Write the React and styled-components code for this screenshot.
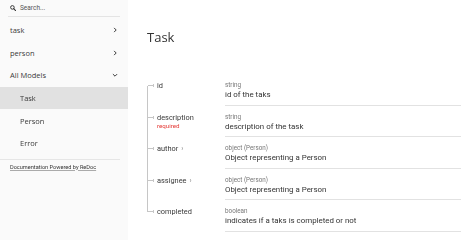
import React from "react";
import styled, { createGlobalStyle } from "styled-components";

const GlobalStyle = createGlobalStyle`
  html, body {
    margin: 0;
    padding: 0;
    background: #fff;
  }
  body {
    font-family: Roboto, "Liberation Sans", sans-serif;
    color: #333;
  }
`;

const Page = styled.div`
  display: flex;
  width: 474px;
  height: 244px;
  overflow: hidden;
  opacity: 0.999;
`;

const Sidebar = styled.nav`
  width: 128px;
  height: 240px;
  flex-shrink: 0;
  background: #fafafa;
  display: flex;
  flex-direction: column;
  font-family: "Open Sans", sans-serif;
`;

const Search = styled.div`
  display: flex;
  align-items: center;
  gap: 4px;
  height: 16px;
  margin: 0 8px;
  padding-left: 2px;
  border-bottom: 1px solid #e4e4e4;
  font-size: 6.5px;
  color: #555;
  font-family: Roboto, sans-serif;
`;

const Menu = styled.ul`
  list-style: none;
  margin: 2px 8px 0 0;
  padding: 0 0 4px;
  border-bottom: 1px solid #e6e6e6;
`;

const Item = styled.li`
  height: 22.6px;
  display: flex;
  align-items: center;
  justify-content: space-between;
  margin-right: -8px;
  padding: 0 10px 0 ${(p) => (p.$child ? "20px" : "10px")};
  font-size: 7.5px;
  color: #3a3a3a;
  background: ${(p) => (p.$active ? "#e1e1e1" : "transparent")};
`;

const Powered = styled.a`
  display: block;
  margin: 4px 10px 0;
  font-size: 5.6px;
  color: #333;
  text-decoration: underline;
  text-decoration-color: #aaa;
  font-family: Roboto, sans-serif;
`;

const Main = styled.main`
  flex: 1;
  padding: 29px 12px 0 19px;
`;

const Title = styled.h2`
  margin: 0 0 29px;
  font-family: "Open Sans", sans-serif;
  font-weight: 400;
  font-size: 13px;
  line-height: 16px;
  color: #333;
`;

const Table = styled.div`
  display: grid;
  grid-template-columns: 78px 236px;
`;

const LINE = "#c6c6c6";

const NameCell = styled.div`
  position: relative;
  padding: 7px 0 0 9px;
  border-left: 1px solid ${(p) => (p.$last ? "transparent" : LINE)};
  font-size: 7.4px;
  line-height: 9px;
  color: #3a3a3a;

  &::before {
    content: "";
    position: absolute;
    left: -1px;
    top: 0;
    width: 1px;
    height: ${(p) => (p.$first || p.$last ? "12px" : "0")};
    background: ${(p) => (p.$first ? "#fff" : LINE)};
  }
`;

const Bullet = styled.span`
  position: absolute;
  left: 0;
  top: 10px;
  display: flex;
  align-items: center;

  &::before {
    content: "";
    width: 5px;
    height: 1px;
    background: ${LINE};
  }
  &::after {
    content: "";
    width: 1px;
    height: 3px;
    background: ${LINE};
  }
`;

const Required = styled.div`
  color: #e53935;
  font-size: 6.2px;
  line-height: 8px;
`;

const Chevron = styled.span`
  color: #888;
  font-size: 7px;
  margin-left: 3px;
`;

const DetailCell = styled.div`
  padding: 7px 0 4.5px;
  border-bottom: 1px solid #e2e2e2;
`;

const Type = styled.div`
  font-size: 6.3px;
  line-height: 8px;
  color: #777;
`;

const Desc = styled.div`
  font-size: 7.9px;
  line-height: 10px;
  margin-top: 1px;
  color: #333;
`;

const SearchIcon = () => (
  <svg width="6" height="6" viewBox="0 0 10 10">
    <circle cx="4" cy="4" r="3" fill="none" stroke="#333" strokeWidth="1.6" />
    <line x1="6.2" y1="6.2" x2="9.3" y2="9.3" stroke="#333" strokeWidth="1.8" strokeLinecap="round" />
  </svg>
);

const ChevronRight = () => (
  <svg width="6" height="6" viewBox="0 0 10 10">
    <path d="M3.5 1.5 L7 5 L3.5 8.5" fill="none" stroke="#333" strokeWidth="1.6" />
  </svg>
);

const ChevronDown = () => (
  <svg width="6" height="6" viewBox="0 0 10 10">
    <path d="M1.5 3.5 L5 7 L8.5 3.5" fill="none" stroke="#333" strokeWidth="1.6" />
  </svg>
);

const fields = [
  { name: "id", type: "string", desc: "id of the taks" },
  { name: "description", type: "string", desc: "description of the task", required: true },
  { name: "author", type: "object (Person)", desc: "Object representing a Person", nested: true },
  { name: "assignee", type: "object (Person)", desc: "Object representing a Person", nested: true },
  { name: "completed", type: "boolean", desc: "indicates if a taks is completed or not" },
];

export default function App() {
  return (
    <Page>
      <GlobalStyle />
      <Sidebar>
        <Search>
          <SearchIcon />
          <span>Search...</span>
        </Search>
        <Menu>
          <Item>
            task <ChevronRight />
          </Item>
          <Item>
            person <ChevronRight />
          </Item>
          <Item>
            All Models <ChevronDown />
          </Item>
          <Item $child $active>
            Task
          </Item>
          <Item $child>Person</Item>
          <Item $child>Error</Item>
        </Menu>
        <Powered>Documentation Powered by ReDoc</Powered>
      </Sidebar>
      <Main>
        <Title>Task</Title>
        <Table>
          {fields.map((f, i) => (
            <React.Fragment key={f.name}>
              <NameCell $first={i === 0} $last={i === fields.length - 1}>
                <Bullet />
                {f.name}
                {f.nested && <Chevron>›</Chevron>}
                {f.required && <Required>required</Required>}
              </NameCell>
              <DetailCell>
                <Type>{f.type}</Type>
                <Desc>{f.desc}</Desc>
              </DetailCell>
            </React.Fragment>
          ))}
        </Table>
      </Main>
    </Page>
  );
}
